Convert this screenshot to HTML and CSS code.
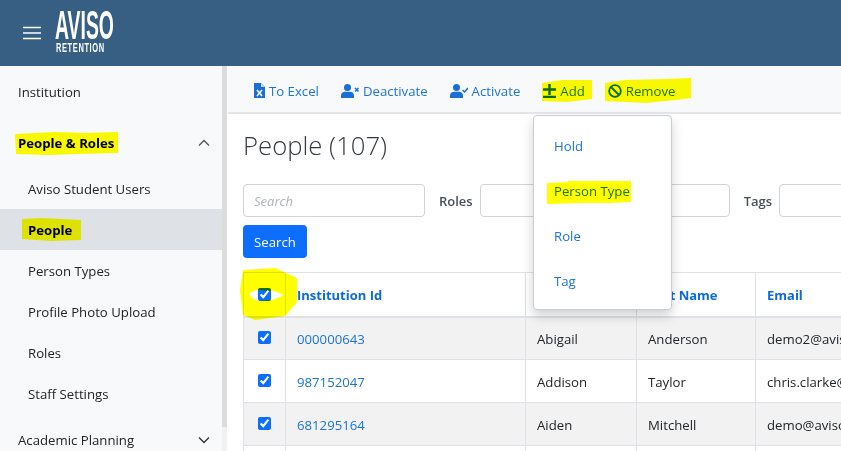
FILE: index.html
```html
<!DOCTYPE html>
<html lang="en">
<head>
<meta charset="utf-8">
<title>People</title>
<link rel="stylesheet" href="styles.css">
</head>
<body>
<header class="topbar">
  <svg class="burger" width="18" height="14" viewBox="0 0 18 14"><path d="M0 1.5h18M0 7h18M0 12.500h18" stroke="#fff" stroke-width="1.300" fill="none"/></svg>
  <div class="logo">
    <span class="logo-main">AVISO</span>
    <span class="logo-sub">RETENTION</span>
  </div>
</header>
<div class="shell">
  <nav class="sidebar">
    <a class="top-item">Institution</a>
    <a class="top-item strong">People &amp; Roles
      <svg width="12" height="8" viewBox="0 0 12 8"><path d="M1 6.500 6 1.500l5 5" stroke="#555" stroke-width="1.400" fill="none"/></svg>
    </a>
    <a class="sub-item">Aviso Student Users</a>
    <a class="sub-item active">People</a>
    <a class="sub-item">Person Types</a>
    <a class="sub-item">Profile Photo Upload</a>
    <a class="sub-item">Roles</a>
    <a class="sub-item">Staff Settings</a>
    <a class="top-item">Academic Planning
      <svg width="12" height="8" viewBox="0 0 12 8"><path d="M1 1.500 6 6.500l5-5" stroke="#333" stroke-width="1.400" fill="none"/></svg>
    </a>
  </nav>
  <div class="scrolltrack"><div class="scrollthumb"></div></div>
  <main class="main">
    <div class="toolbar">
      <a class="tool">
        <svg width="11" height="15" viewBox="0 0 11 15"><path d="M0 0h7l4 4v11H0z" fill="#1a6fd6"/><path d="M7 0v4h4z" fill="#cfe0f7"/><path d="M3 7l5 6M8 7l-5 6" stroke="#fff" stroke-width="1.600"/></svg>
        To Excel</a>
      <a class="tool">
        <svg width="18" height="14" viewBox="0 0 18 14"><circle cx="6.500" cy="3.500" r="3.500" fill="#1a6fd6"/><path d="M0 14v-2.500C0 9 2 7.800 4 7.800h5c2 0 4 1.200 4 3.700V14z" fill="#1a6fd6"/><path d="M14 4l3.500 3.500M17.500 4 14 7.500" stroke="#1a6fd6" stroke-width="1.500"/></svg>
        Deactivate</a>
      <a class="tool">
        <svg width="18" height="14" viewBox="0 0 18 14"><circle cx="6.500" cy="3.500" r="3.500" fill="#1a6fd6"/><path d="M0 14v-2.500C0 9 2 7.800 4 7.800h5c2 0 4 1.200 4 3.700V14z" fill="#1a6fd6"/><path d="M12.500 6l2 2 3.500-4" stroke="#1a6fd6" stroke-width="1.500" fill="none"/></svg>
        Activate</a>
      <a class="tool">
        <svg width="13" height="14" viewBox="0 0 13 14"><path d="M6.500 0v11M0 5.500h13M0 13h13" stroke="#0b6bdc" stroke-width="2.500"/></svg>
        Add</a>
      <a class="tool tool-last">
        <svg width="14" height="14" viewBox="0 0 14 14"><circle cx="7" cy="7" r="5.800" stroke="#0b6bdc" stroke-width="1.800" fill="none"/><path d="M3 3l8 8" stroke="#0b6bdc" stroke-width="1.800"/></svg>
        Remove</a>
    </div>
    <div class="content">
      <h1 class="title">People (107)</h1>
      <form class="filters">
        <input class="field field-search" placeholder="Search">
        <label class="label">Roles</label>
        <input class="field field-roles">
        <label class="label">Tags</label>
        <input class="field field-tags">
      </form>
      <button class="btn" type="button">Search</button>
      <table class="grid">
        <colgroup>
          <col class="c-check"><col class="c-id"><col class="c-first"><col class="c-last"><col class="c-email">
        </colgroup>
        <thead>
          <tr>
            <th class="check"><input type="checkbox" checked></th>
            <th>Institution Id</th>
            <th>First Name</th>
            <th>Last Name</th>
            <th>Email</th>
          </tr>
        </thead>
        <tbody>
          <tr>
            <td class="check"><input type="checkbox" checked></td>
            <td><a class="id">000000643</a></td>
            <td>Abigail</td><td>Anderson</td><td>demo2@avisoretention.com</td>
          </tr>
          <tr>
            <td class="check"><input type="checkbox" checked></td>
            <td><a class="id">987152047</a></td>
            <td>Addison</td><td>Taylor</td><td>chris.clarke@avisoretention.com</td>
          </tr>
          <tr>
            <td class="check"><input type="checkbox" checked></td>
            <td><a class="id">681295164</a></td>
            <td>Aiden</td><td>Mitchell</td><td>demo@avisoretention.com</td>
          </tr>
          <tr>
            <td class="check"><input type="checkbox" checked></td>
            <td></td>
            <td></td><td></td><td></td>
          </tr>
        </tbody>
      </table>
    </div>
    <div class="menu">
      <a class="menu-item">Hold</a>
      <a class="menu-item">Person Type</a>
      <a class="menu-item">Role</a>
      <a class="menu-item">Tag</a>
    </div>
  </main>
</div>
<svg class="marks" width="841" height="451" viewBox="0 0 841 451">
  <path fill="#ff0" d="M15 134l40-2 30 1 33-1 0 21-40 1-30 1-32-1z"/>
  <path fill="#ff0" d="M22 219l20-1 39 2 0 20-30 1-29-2z"/>
  <path fill="#ff0" d="M542 83l20-3 30 0 0 19-25 3-25-1z"/>
  <path fill="#ff0" d="M605 83l20-3 40-1 26-1 0 20-15 2-30 3-41-2z"/>
  <path fill="#ff0" d="M547 183l20-1 1-1 44 0 19 0 0 21-21 1-30 0-33 1z"/>
  <path fill="#ff0" fill-rule="evenodd" d="M243 270l32-2 22 10 0 24-12 14-30 4-12-5-3-25zM249 294C252 291 255 290 258 290L271 291C276 291 280 293 283 295 279 298 275 299 271 300L258 301C254 300 251 297 249 294z"/>
</svg>
</body>
</html>
```
FILE: styles.css
```css
* { box-sizing: border-box; }
html, body { margin: 0; height: 100%; overflow: hidden; }
body {
  font-family: "Open Sans", "Noto Sans", sans-serif;
  font-size: 13.2px;
  color: #212529;
  background: #fff;
  position: relative;
}
a { display: block; }

.topbar {
  height: 66px;
  background: #365f83;
  display: flex;
  align-items: center;
  padding-left: 23px;
  gap: 14px;
}
.burger { margin-top: -1px; }
.logo { display: flex; flex-direction: column; color: #fff; font-family: "Liberation Sans", sans-serif; margin-top: 0; }
.logo-main {
  font-size: 40px; line-height: 29px; font-weight: 700;
  transform: scaleX(.485); transform-origin: left center; width: 60px; white-space: nowrap;
}
.logo-sub {
  font-size: 12.500px; line-height: 13px; margin-top: 2px; letter-spacing: 1px; font-weight: 700;
  transform: scaleX(.6); transform-origin: left center; width: 60px; white-space: nowrap; margin-left: 1px;
}

.shell { display: grid; grid-template-columns: 222px 6px 1fr; height: 385px; }

.sidebar { background: #f8f9fa; overflow: hidden; }
.top-item {
  height: 51px; padding: 0 18px; display: flex; align-items: center; justify-content: space-between;
  color: #212529; white-space: nowrap;
}
.top-item svg { margin-right: -6px; }
.strong { font-weight: 700; color: #000; }
.sub-item { height: 41px; line-height: 43px; padding-left: 28px; color: #212529; white-space: nowrap; }
.sub-item.active { background: #dee2e6; font-weight: 700; color: #000; }

.scrolltrack { background: #f1f1f1; border-right: 1px solid #fff; }
.scrollthumb { height: 361px; background: #dcdcdc; }

.main { position: relative; overflow: hidden; min-width: 0; }
.toolbar {
  height: 48px; background: #f8f9fa; border-bottom: 2px solid #e4e6e9;
  display: flex; align-items: center; padding: 3px 0 0 26px; gap: 22px;
}
.tool { display: flex; align-items: center; gap: 4px; color: #1c74d4; white-space: nowrap; }
.tool:nth-child(4) { margin-left: 1px; }
.tool-last { margin-left: 1px; }

.content { padding: 0 0 0 15px; }
.title { margin: 0; padding-top: 16px; height: 70px; font-size: 25.700px; line-height: 32px; font-weight: 300; color: #343a40; white-space: nowrap; }
.filters { display: flex; align-items: center; height: 33px; white-space: nowrap; }
.field { height: 33px; border: 1px solid #ced4da; border-radius: 4px; background: #fff; font: inherit; padding: 0 10px; flex: none; }
.field::placeholder { color: #adb5bd; font-style: italic; font-size: 13px; }
.field-search { width: 182px; }
.field-roles { width: 250px; }
.field-tags { width: 200px; }
.label { font-weight: 600; color: #495057; font-size: 13px; margin: 0 7px 0 14px; }
.btn {
  display: block; margin-top: 8px; height: 33px; width: 64px; padding: 0; border: 0; border-radius: 4px;
  background: #0d6efd; color: #fff; font: inherit;
}

.grid { margin-top: 14px; border-collapse: collapse; table-layout: fixed; width: 700px; }
.c-check { width: 42px; }
.c-id { width: 240px; }
.c-first { width: 111px; }
.c-last { width: 119px; }
.c-email { width: 188px; }
.grid th, .grid td { border: 1px solid #dee2e6; padding: 1px 11px 0; white-space: nowrap; overflow: hidden; text-align: left; }
.grid th { height: 44px; color: #0b6bdc; font-weight: 700; border-bottom-width: 2px; font-size: 13px; }
.grid td { height: 43px; }
.grid tbody tr:nth-child(odd) td { background: #f2f2f2; }
.grid .check { text-align: center; padding: 0; }
.grid input { margin: 0 0 3px; accent-color: #0d6efd; vertical-align: middle; }
.id { color: #1c74d4; }

.menu {
  position: absolute; left: 305px; top: 49px; width: 139px; height: 195px;
  background: #fff; border: 1px solid #c9ccd0; border-radius: 4px;
  box-shadow: 0 6px 12px rgba(0,0,0,.18);
  display: flex; flex-direction: column; padding-top: 8px;
}
.menu-item { height: 45px; line-height: 45px; padding-left: 20px; color: #1c74d4; }

.marks { position: absolute; left: 0; top: 0; mix-blend-mode: multiply; pointer-events: none; }
```
